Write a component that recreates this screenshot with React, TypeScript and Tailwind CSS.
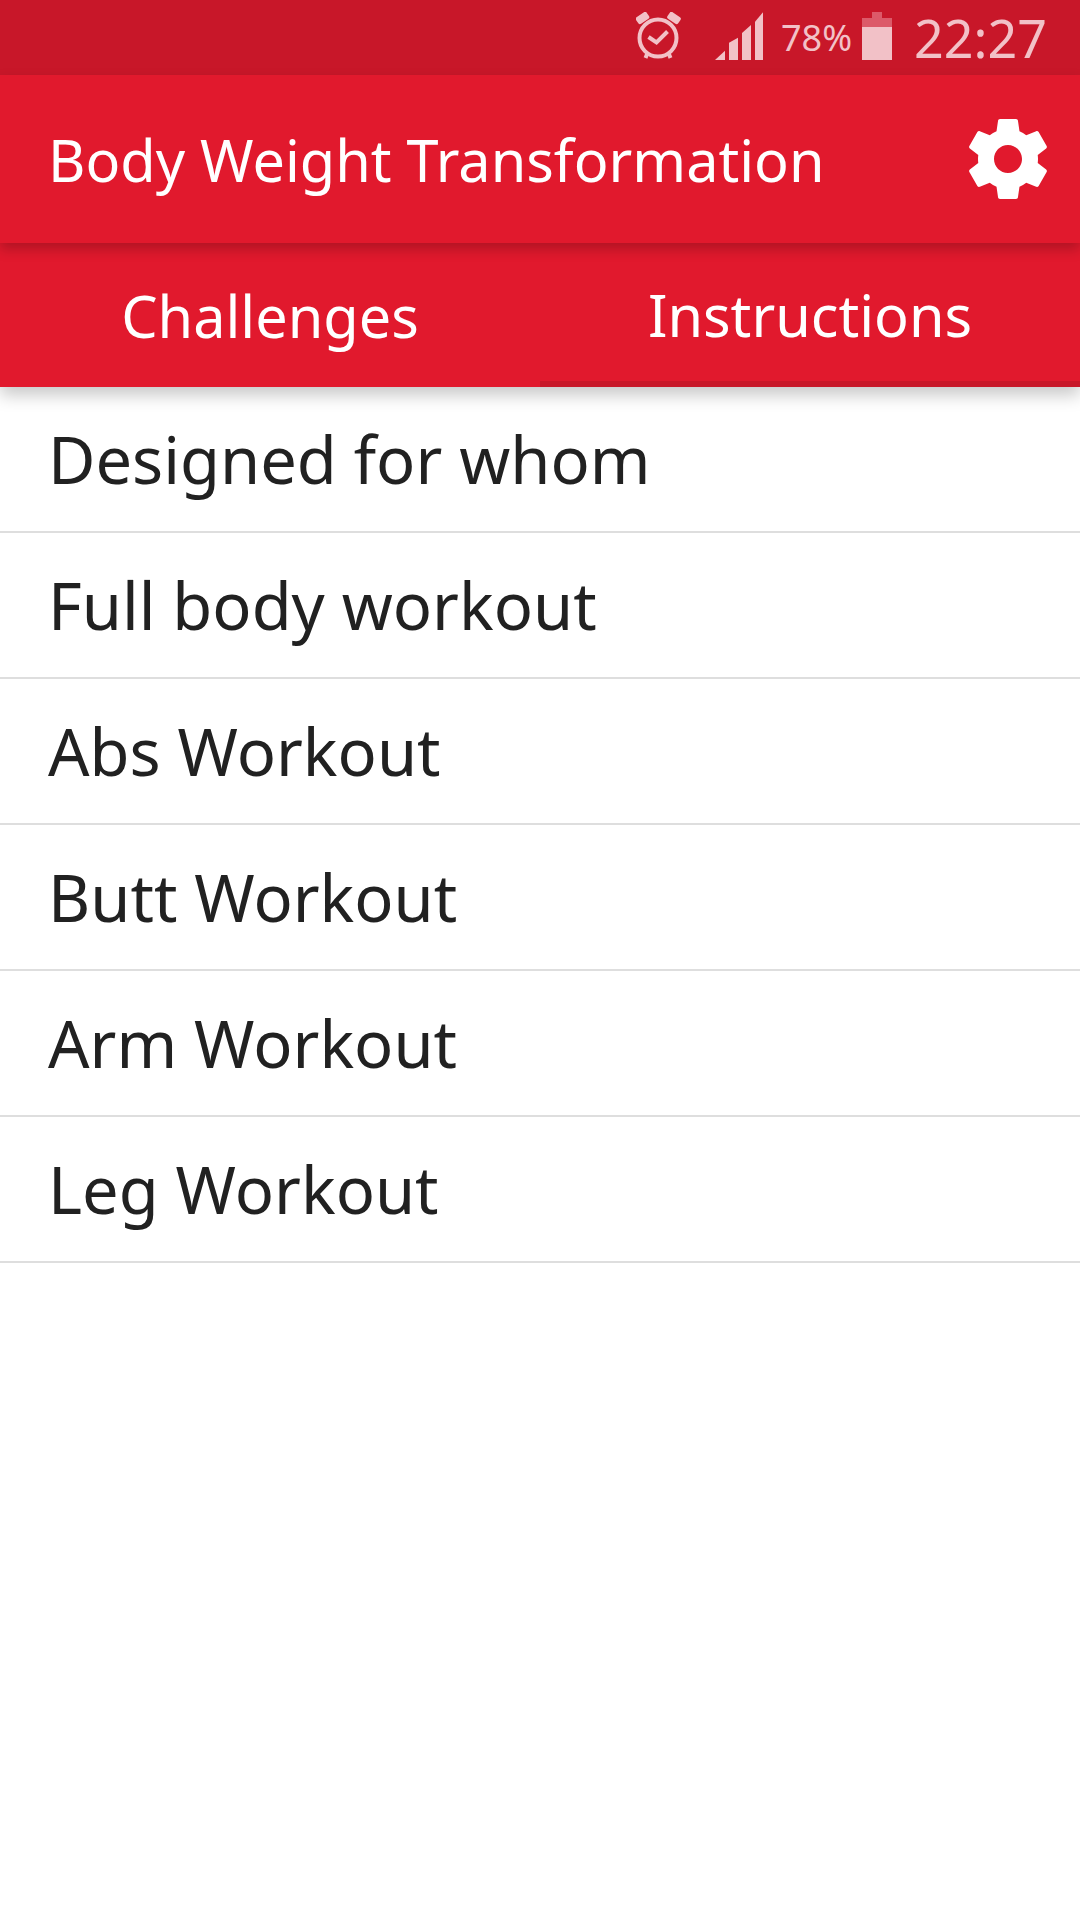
const font = "font-['Noto_Sans',sans-serif]";

const rows = ["Designed for whom", "Full body workout", "Abs Workout", "Butt Workout", "Arm Workout", "Leg Workout"];

function AlarmIcon() {
	return (
		<svg width="45" height="48" viewBox="0 0 45 48" fill="none" className="block">
			<g fill="#f2c1c7">
				<rect x="0" y="2" width="13" height="8" rx="2" transform="rotate(-35 6.500 6)" />
				<rect x="31.500" y="2" width="13" height="8" rx="2" transform="rotate(35 38 6)" />
			</g>
			<circle cx="22" cy="26" r="18.500" stroke="#f2c1c7" strokeWidth="4" />
			<path d="M11.500 41l-2 5M32.500 41l2 5" stroke="#f2c1c7" strokeWidth="4" />
			<path d="M12.500 25l8 5.500 11-11" stroke="#f2c1c7" strokeWidth="4" />
		</svg>
	);
}

function SignalIcon() {
	return (
		<svg width="48" height="48" viewBox="0 0 48 48" className="block">
			<path d="M0 48L10 38.700V48Z" fill="#f2c1c7" />
			<path d="M14 30.700L23 25.700V48H14Z" fill="#f2c1c7" />
			<path d="M27 21L36 13V48H27Z" fill="#f2c1c7" />
			<path d="M40 9.700L48 0.300V48H40Z" fill="#f2c1c7" />
		</svg>
	);
}

function BatteryIcon() {
	return (
		<svg width="30" height="48" viewBox="0 0 30 48" className="block">
			<path d="M10 0H20V6H30V15H0V6H10Z" fill="#dc5a69" />
			<rect x="0" y="15" width="30" height="33" fill="#f2c1c7" />
		</svg>
	);
}

function GearIcon() {
	return (
		<svg width="96" height="96" viewBox="0 0 24 24" fill="#fff" className="block">
			<path d="M19.43 12.98c.04-.32.07-.64.07-.98s-.03-.66-.07-.98l2.11-1.65c.19-.15.24-.42.12-.64l-2-3.46c-.12-.22-.39-.3-.61-.22l-2.49 1c-.52-.4-1.08-.73-1.69-.98l-.38-2.65C14.46 2.18 14.25 2 14 2h-4c-.25 0-.46.18-.49.42l-.38 2.65c-.61.25-1.17.59-1.69.98l-2.49-1c-.23-.09-.49 0-.61.22l-2 3.46c-.13.22-.07.49.12.64l2.11 1.65c-.04.32-.07.65-.07.98s.03.66.07.98l-2.11 1.65c-.19.15-.24.42-.12.64l2 3.46c.12.22.39.3.61.22l2.49-1c.52.4 1.08.73 1.69.98l.38 2.65c.03.24.24.42.49.42h4c.25 0 .46-.18.49-.42l.38-2.65c.61-.25 1.17-.59 1.69-.98l2.49 1c.23.09.49 0 .61-.22l2-3.46c.12-.22.07-.49-.12-.64l-2.11-1.65zM12 15.500c-1.930 0-3.500-1.570-3.500-3.500s1.570-3.500 3.500-3.500 3.500 1.570 3.500 3.500-1.570 3.500-3.500 3.500z" />
		</svg>
	);
}

export default function App() {
	return (
		<div className={`w-[1080px] h-[1920px] bg-white overflow-hidden ${font}`}>
			<div className="h-[75px] bg-[#c81729] flex items-center justify-end pb-[3px] pr-[33px] text-[#f2c1c7]">
				<AlarmIcon />
				<div className="ml-[34px]">
					<SignalIcon />
				</div>
				<span className="ml-[18px] text-[36px] leading-none mt-[3px]">78%</span>
				<div className="ml-[10px]">
					<BatteryIcon />
				</div>
				<span className="ml-[22px] text-[52px] leading-none mt-[3px]">22:27</span>
			</div>

			<div className="relative z-10 h-[168px] bg-[#e1192d] flex items-center justify-between pl-[48px] pr-[24px] shadow-[0_6px_12px_rgba(0,0,0,0.22)]">
				<span className="text-[57.6px] leading-none text-white mt-[2px]">Body Weight Transformation</span>
				<GearIcon />
			</div>

			<div className="relative z-0 h-[144px] bg-[#e1192d] flex shadow-[0_8px_16px_rgba(0,0,0,0.22)]">
				<div className="flex-1 flex items-center justify-center pt-[2px] text-[57.6px] text-white">Challenges</div>
				<div className="flex-1 flex items-center justify-center text-[57.6px] text-white border-y-[6px] border-t-transparent border-b-[#c81729]">
					Instructions
				</div>
			</div>

			<div>
				{rows.map((row) => (
					<div key={row} className="h-[146px] flex items-center pl-[48px] pt-[2px] border-b-2 border-[#dedede] text-[65px] text-[#212121]">
						{row}
					</div>
				))}
			</div>
		</div>
	);
}
